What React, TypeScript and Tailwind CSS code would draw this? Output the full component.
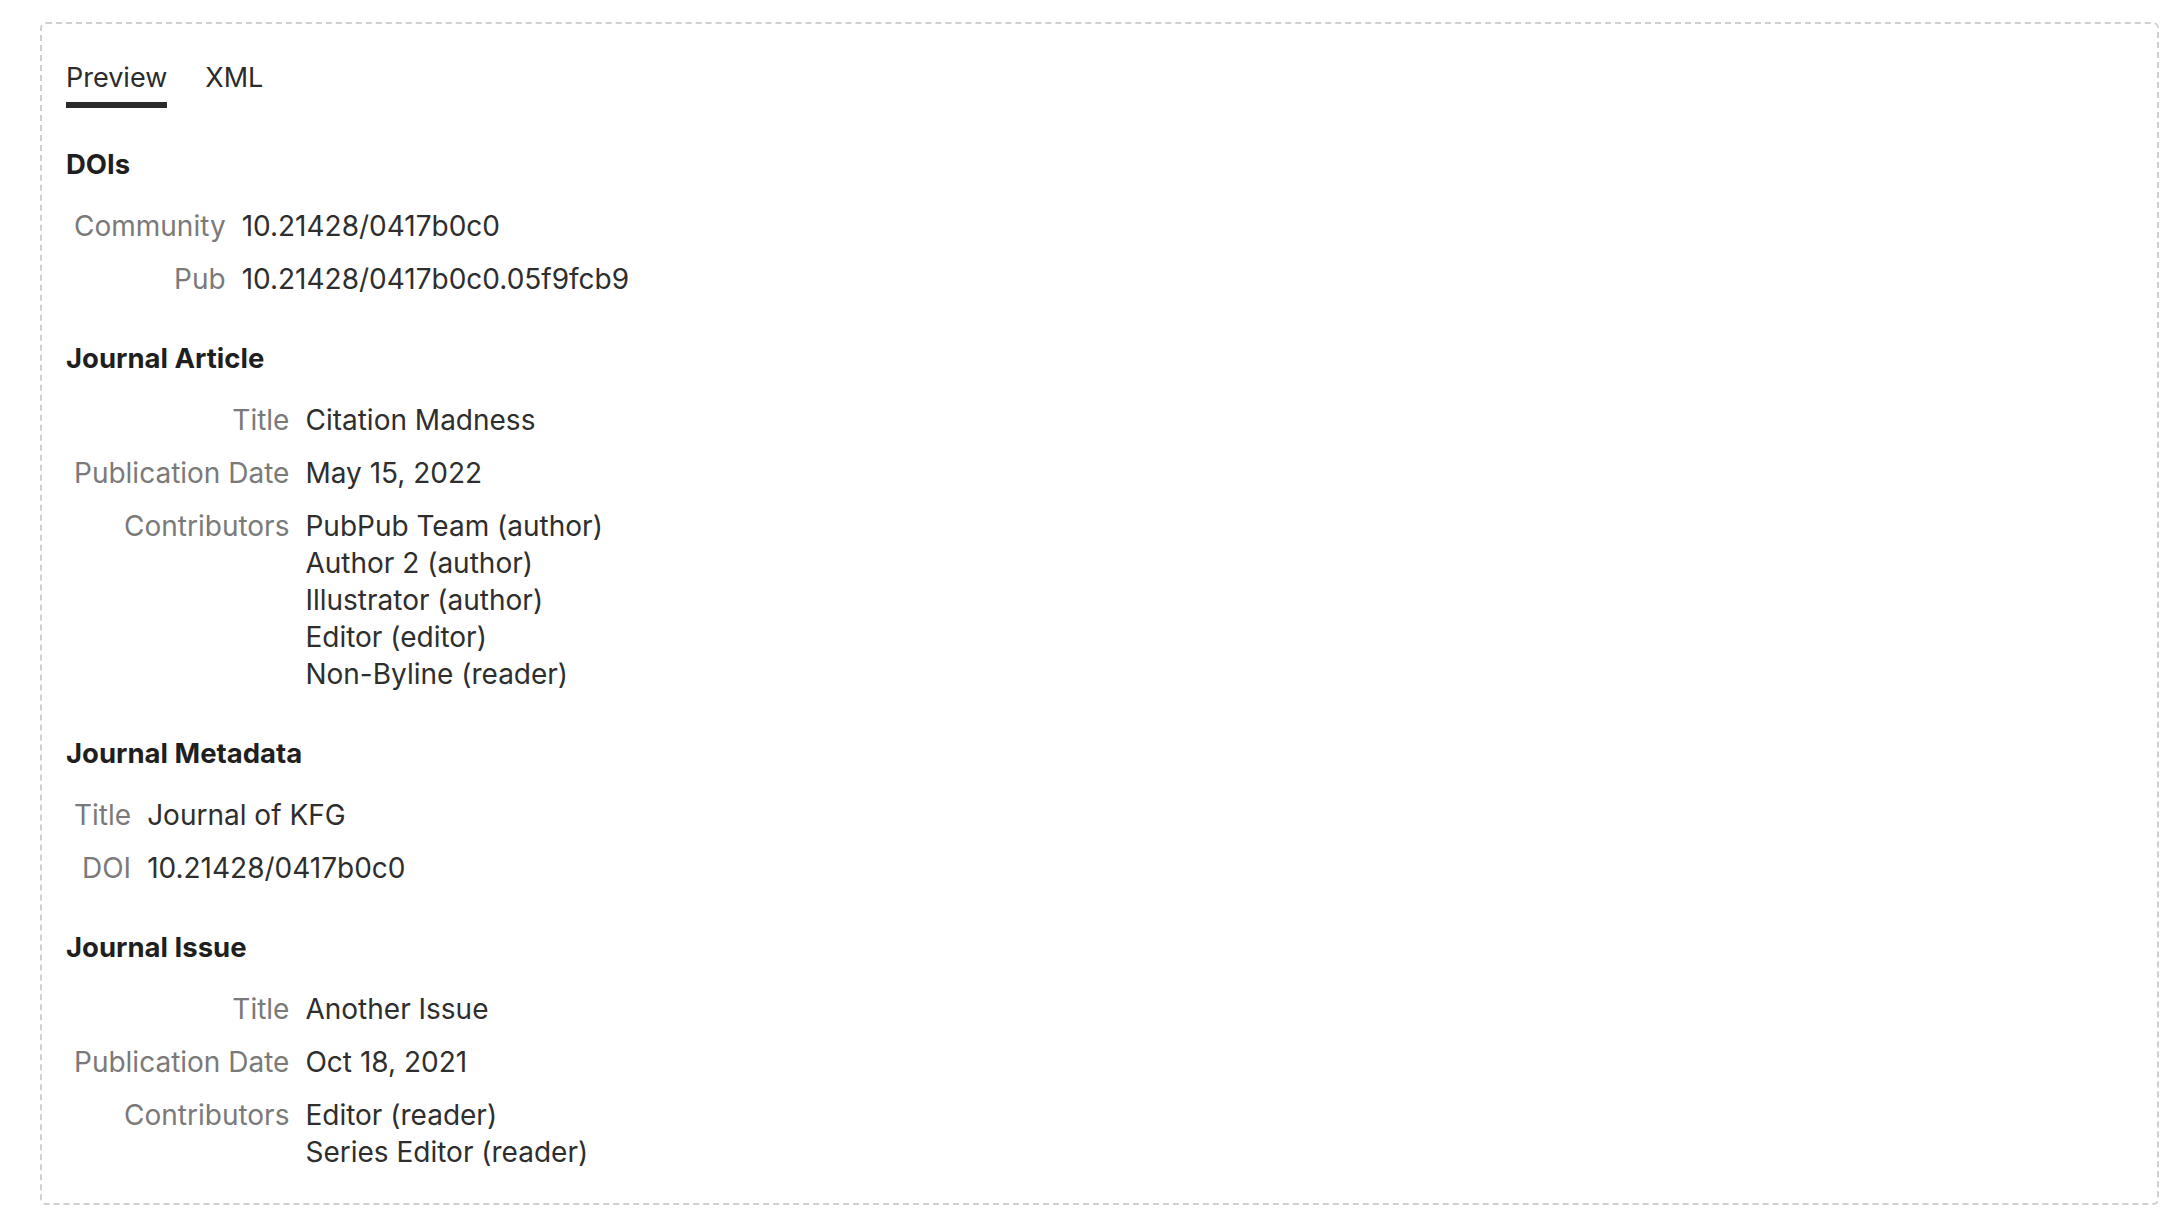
import React from 'react'

// Deposit preview panel: tabs on top, then one labelled table per section.

type Row = { label: string; value: string[] }
type Section = { title: string; rows: Row[] }

const SECTIONS: Section[] = [
  {
    title: 'DOIs',
    rows: [
      { label: 'Community', value: ['10.21428/0417b0c0'] },
      { label: 'Pub', value: ['10.21428/0417b0c0.05f9fcb9'] },
    ],
  },
  {
    title: 'Journal Article',
    rows: [
      { label: 'Title', value: ['Citation Madness'] },
      { label: 'Publication Date', value: ['May 15, 2022'] },
      {
        label: 'Contributors',
        value: [
          'PubPub Team (author)',
          'Author 2 (author)',
          'Illustrator (author)',
          'Editor (editor)',
          'Non-Byline (reader)',
        ],
      },
    ],
  },
  {
    title: 'Journal Metadata',
    rows: [
      { label: 'Title', value: ['Journal of KFG'] },
      { label: 'DOI', value: ['10.21428/0417b0c0'] },
    ],
  },
  {
    title: 'Journal Issue',
    rows: [
      { label: 'Title', value: ['Another Issue'] },
      { label: 'Publication Date', value: ['Oct 18, 2021'] },
      { label: 'Contributors', value: ['Editor (reader)', 'Series Editor (reader)'] },
    ],
  },
]

function SectionTable({ section }: { section: Section }) {
  return (
    <section>
      <h2 className="text-[27.5px] leading-[36px] font-bold text-[#1f1f1f]">{section.title}</h2>
      <div className="mt-[18px] pl-2 grid grid-cols-[auto_1fr] gap-x-4">
        {section.rows.map((row) => (
          <React.Fragment key={row.label}>
            <div className="py-2 text-right text-[28px] leading-[37px] text-[#7a7a7a]">{row.label}</div>
            <div className="py-2 flex flex-col text-[28px] leading-[37px] text-[#2e2e2e]">
              {row.value.map((v) => (
                <span key={v}>{v}</span>
              ))}
            </div>
          </React.Fragment>
        ))}
      </div>
    </section>
  )
}

export default function App() {
  return (
    <div className="min-h-screen bg-white pl-10 pr-[25px] pt-[22px] font-['Inter',sans-serif]">
      <div className="rounded-md border-2 border-dashed border-[#d0d0d0] px-6 pt-9 pb-6">
        {/* Tabs */}
        <div className="flex items-start gap-[38px]">
          <div className="flex flex-col">
            <span className="text-[27px] leading-[36px] text-[#2b2b2b]">Preview</span>
            <span className="mt-1.5 h-1.5 bg-[#2b2b2b]" />
          </div>
          <span className="text-[27px] leading-[36px] text-[#2b2b2b]">XML</span>
        </div>

        <div className="mt-[38px] flex flex-col gap-[34px]">
          {SECTIONS.map((s) => (
            <SectionTable key={s.title} section={s} />
          ))}
        </div>
      </div>
    </div>
  )
}
